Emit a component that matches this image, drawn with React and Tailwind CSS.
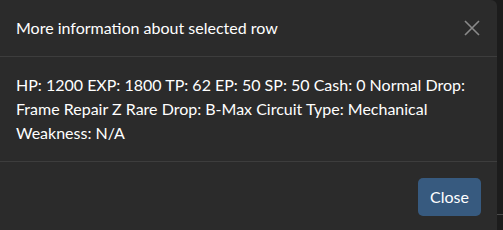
import React from "react";

const stats = "HP: 1200 EXP: 1800 TP: 62 EP: 50 SP: 50 Cash: 0 Normal Drop: Frame Repair Z Rare Drop: B-Max Circuit Type: Mechanical Weakness: N/A";

export default function App() {
    return (
        <div className="flex w-[503px] h-[230px] overflow-hidden bg-[#1c1c1c] text-white" style={{ fontFamily: "Lato, 'Open Sans', sans-serif" }}>
            <div className="w-[497px] h-[230px] flex flex-col bg-[#2b2b2b] rounded-tr-[6px] shrink-0">
                {/* header */}
                <div className="flex items-center justify-between h-[57px] px-4 border-b border-[#3d3d3d]">
                    <h5 className="text-base leading-6 font-normal">More information about selected row</h5>
                    <button type="button" className="w-4 h-4 mr-[1px] flex items-center justify-center text-[#8a8a8a]">
                        <svg viewBox="0 0 16 16" className="w-4 h-4" fill="none" stroke="currentColor" strokeWidth="1.6">
                            <path d="M1 1L15 15M15 1L1 15" />
                        </svg>
                    </button>
                </div>

                {/* body */}
                <div className="p-4 border-b border-[#3d3d3d]">
                    <p className="text-base leading-6">{stats}</p>
                </div>

                {/* footer */}
                <div className="flex justify-end px-4 pt-4">
                    <button type="button" className="h-[38px] px-3 rounded-[5px] bg-[#375a7f] text-base text-white">
                        Close
                    </button>
                </div>
            </div>
            <div className="flex-1 flex flex-col">
                <div className="mt-[214px] h-px bg-[#4a4a4a]" />
            </div>
        </div>
    );
}
